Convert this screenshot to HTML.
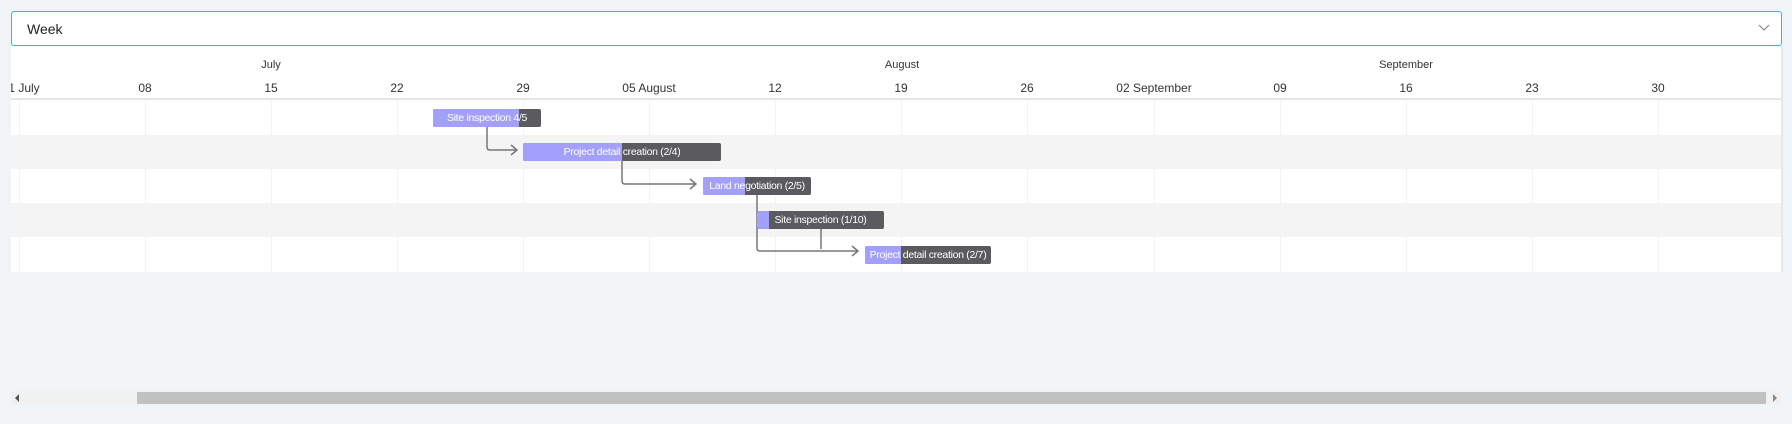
<!DOCTYPE html><html><head><style>
body{margin:0;width:1792px;height:424px;background:#f2f5f8;font-family:"Liberation Sans",sans-serif;position:relative;overflow:hidden}
.dd{position:absolute;left:11px;top:11px;width:1769px;height:33px;border:1px solid #29b6f6;border-radius:3px;background:#fff;box-sizing:content-box}
.dd span{position:absolute;left:15px;top:9px;font-size:14px;color:#222}
.chart{position:absolute;left:11px;top:46px;width:1770px;height:226px;background:#fff;overflow:hidden;border-right:2px solid #e8e8e8}
.lbl{position:absolute;font-size:12px;color:#333;transform:translateX(-50%);white-space:nowrap}
.row{position:absolute;left:0;width:1770px;height:34px}
.vl{position:absolute;top:54px;width:1px;height:172px;background:#f3f3f3}
.bar{position:absolute;height:18px;background:#5a5a5f;border-radius:2px;overflow:hidden;color:#fff;font-size:10.5px;line-height:18px;text-align:center;white-space:nowrap;letter-spacing:-0.3px}
.bar i{position:absolute;left:0;top:0;bottom:0;background:#a3a0fb}
.bar b{position:relative;font-weight:normal}
</style></head><body>
<div class="dd"><span>Week</span>
<svg style="position:absolute;right:11px;top:12px" width="12" height="8"><path d="M1 1 L6 6 L11 1" stroke="#888" fill="none" stroke-width="1.2"/></svg></div>
<div class="chart">
<div class="lbl" style="left:260px;top:13px;font-size:11px">July</div>
<div class="lbl" style="left:891px;top:13px;font-size:11px">August</div>
<div class="lbl" style="left:1395px;top:13px;font-size:11px">September</div>
<div class="lbl" style="left:13px;top:35px">1 July</div>
<div class="lbl" style="left:134px;top:35px">08</div>
<div class="lbl" style="left:260px;top:35px">15</div>
<div class="lbl" style="left:386px;top:35px">22</div>
<div class="lbl" style="left:512px;top:35px">29</div>
<div class="lbl" style="left:638px;top:35px">05 August</div>
<div class="lbl" style="left:764px;top:35px">12</div>
<div class="lbl" style="left:890px;top:35px">19</div>
<div class="lbl" style="left:1016px;top:35px">26</div>
<div class="lbl" style="left:1143px;top:35px">02 September</div>
<div class="lbl" style="left:1269px;top:35px">09</div>
<div class="lbl" style="left:1395px;top:35px">16</div>
<div class="lbl" style="left:1521px;top:35px">23</div>
<div class="lbl" style="left:1647px;top:35px">30</div>
<div style="position:absolute;left:0;top:52px;width:1770px;height:2px;background:#e6e6e6"></div>
<div class="row" style="top:54px;background:#fff"></div>
<div class="row" style="top:89px;background:#f4f4f4"></div>
<div class="row" style="top:123px;background:#fff"></div>
<div class="row" style="top:157px;background:#f4f4f4"></div>
<div class="row" style="top:192px;background:#fff"></div>
<div class="vl" style="left:8px"></div><div class="vl" style="left:134px"></div><div class="vl" style="left:260px"></div><div class="vl" style="left:386px"></div><div class="vl" style="left:512px"></div><div class="vl" style="left:638px"></div><div class="vl" style="left:764px"></div><div class="vl" style="left:890px"></div><div class="vl" style="left:1016px"></div><div class="vl" style="left:1143px"></div><div class="vl" style="left:1269px"></div><div class="vl" style="left:1395px"></div><div class="vl" style="left:1521px"></div><div class="vl" style="left:1647px"></div>
<svg style="position:absolute;left:0;top:0" width="1770" height="226" fill="none" stroke="#777" stroke-width="1.5">
<path d="M476 81 V101 Q476 104 479 104 H506 M500 99 L506 104 L500 109"/>
<path d="M611 114 V135 Q611 138 614 138 H685 M679 133 L685 138 L679 143"/>
<path d="M746 148 V202 Q746 205 749 205 H847 M841 200 L847 205 L841 210"/>
<path d="M810 183 V203"/>
</svg>
<div class="bar" style="left:422px;top:63px;width:108px"><i style="width:86px"></i><b>Site inspection 4/5</b></div>
<div class="bar" style="left:512px;top:97px;width:198px"><i style="width:99px"></i><b>Project detail creation (2/4)</b></div>
<div class="bar" style="left:692px;top:131px;width:108px"><i style="width:42px"></i><b>Land negotiation (2/5)</b></div>
<div class="bar" style="left:746px;top:165px;width:127px"><i style="width:12px"></i><b>Site inspection (1/10)</b></div>
<div class="bar" style="left:854px;top:200px;width:126px"><i style="width:36px"></i><b>Project detail creation (2/7)</b></div>
</div>
<div style="position:absolute;left:11px;top:391px;width:1770px;height:14px;background:#f1f1f1"></div>
<div style="position:absolute;left:137px;top:392px;width:1629px;height:12px;background:#c1c1c1"></div>
<svg style="position:absolute;left:14px;top:394px" width="6" height="8"><path d="M5 0 L1 4 L5 8Z" fill="#555"/></svg>
<svg style="position:absolute;left:1772px;top:394px" width="6" height="8"><path d="M1 0 L5 4 L1 8Z" fill="#888"/></svg>
</body></html>
